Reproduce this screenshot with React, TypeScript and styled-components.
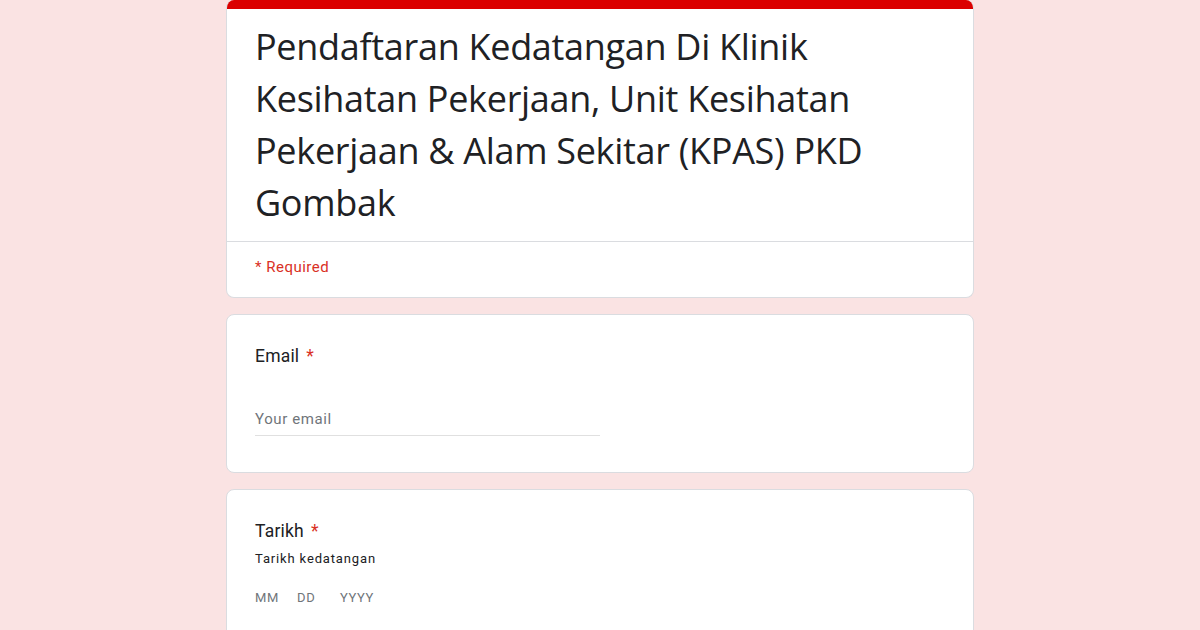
import React from "react";
import styled, { createGlobalStyle } from "styled-components";

const GlobalStyle = createGlobalStyle`
  html, body {
    margin: 0;
    padding: 0;
    background: #fae3e3;
    font-family: Roboto, "Liberation Sans", Arial, sans-serif;
  }
`;

const Page = styled.div`
  width: 748px;
  margin: 0 auto;
  display: flex;
  flex-direction: column;
  gap: 16px;
`;

const Card = styled.div`
  background: #fff;
  border: 1px solid #dadce0;
  border-radius: 8px;
  overflow: hidden;
`;

const HeaderCard = styled(Card)`
  border-top: none;
`;

const TopBar = styled.div`
  height: 9px;
  background: #db0000;
`;

const TitleBlock = styled.div`
  padding: 12px 28px 12px 28px;
  border-bottom: 1px solid #dadce0;
`;

const Title = styled.h1`
  margin: 0;
  font-family: "Open Sans", Roboto, sans-serif;
  font-weight: 400;
  font-size: 36px;
  line-height: 52px;
  color: #202124;
  letter-spacing: -0.3px;
`;

const RequiredNote = styled.div`
  padding: 15px 28px 20px;
  font-size: 15px;
  line-height: 20px;
  color: #d93025;
  letter-spacing: 0.5px;
`;

const QuestionCard = styled.div<{ $pt: number; $pb: number }>`
  background: #fff;
  border: 1px solid #dadce0;
  border-radius: 8px;
  padding: ${(p) => p.$pt}px 28px ${(p) => p.$pb}px;
`;

const Label = styled.div`
  font-size: 17.5px;
  line-height: 24px;
  color: #202124;
  letter-spacing: 0.2px;
`;

const Star = styled.span`
  color: #d93025;
  margin-left: 7px;
`;

const Description = styled.div`
  margin-top: 7px;
  font-size: 13px;
  line-height: 18px;
  color: #202124;
  letter-spacing: 0.85px;
`;

const EmailInput = styled.div`
  margin-top: 32px;
  width: 345px;
  border-bottom: 1px solid #e0e0e0;
  padding: 9px 0 6px;
  font-size: 15px;
  line-height: 20px;
  color: #70757a;
  letter-spacing: 0.6px;
`;

const DateRow = styled.div`
  margin-top: 21px;
  display: flex;
  font-size: 13px;
  line-height: 18px;
  color: #70757a;
  letter-spacing: 0.6px;
  padding-bottom: 40px;
`;

const DatePart = styled.span<{ $w: number }>`
  width: ${(p) => p.$w}px;
`;

export default function App() {
  return (
    <>
      <GlobalStyle />
      <Page>
        <HeaderCard>
          <TopBar />
          <TitleBlock>
            <Title>
              Pendaftaran Kedatangan Di Klinik Kesihatan Pekerjaan, Unit Kesihatan Pekerjaan &amp; Alam Sekitar (KPAS) PKD Gombak
            </Title>
          </TitleBlock>
          <RequiredNote>* Required</RequiredNote>
        </HeaderCard>
        <QuestionCard $pt={29} $pb={36}>
          <Label>
            Email<Star>*</Star>
          </Label>
          <EmailInput>Your email</EmailInput>
        </QuestionCard>
        <QuestionCard $pt={29} $pb={0}>
          <Label>
            Tarikh<Star>*</Star>
          </Label>
          <Description>Tarikh kedatangan</Description>
          <DateRow>
            <DatePart $w={42}>MM</DatePart>
            <DatePart $w={43}>DD</DatePart>
            <DatePart $w={40}>YYYY</DatePart>
          </DateRow>
        </QuestionCard>
      </Page>
    </>
  );
}
